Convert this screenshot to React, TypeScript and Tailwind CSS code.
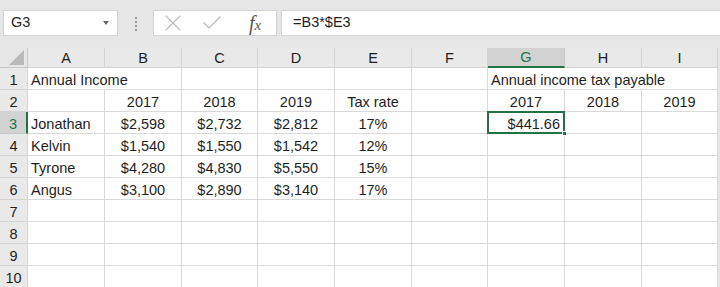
import { X, Check } from "lucide-react";

type Align = "left" | "center" | "right";

interface Cell {
  text: string;
  align?: Align;
}

const cols = ["A", "B", "C", "D", "E", "F", "G", "H", "I"];

const rows: Record<number, Record<string, Cell>> = {
  1: {
    A: { text: "Annual Income", align: "left" },
    G: { text: "Annual income tax payable", align: "left" },
  },
  2: {
    B: { text: "2017" },
    C: { text: "2018" },
    D: { text: "2019" },
    E: { text: "Tax rate" },
    G: { text: "2017" },
    H: { text: "2018" },
    I: { text: "2019" },
  },
  3: {
    A: { text: "Jonathan", align: "left" },
    B: { text: "$2,598" },
    C: { text: "$2,732" },
    D: { text: "$2,812" },
    E: { text: "17%" },
    G: { text: "$441.66", align: "right" },
  },
  4: {
    A: { text: "Kelvin", align: "left" },
    B: { text: "$1,540" },
    C: { text: "$1,550" },
    D: { text: "$1,542" },
    E: { text: "12%" },
  },
  5: {
    A: { text: "Tyrone", align: "left" },
    B: { text: "$4,280" },
    C: { text: "$4,830" },
    D: { text: "$5,550" },
    E: { text: "15%" },
  },
  6: {
    A: { text: "Angus", align: "left" },
    B: { text: "$3,100" },
    C: { text: "$2,890" },
    D: { text: "$3,140" },
    E: { text: "17%" },
  },
};

// text spilling over the right border hides that gridline
const spill: Record<number, string[]> = { 1: ["A", "G", "H"] };

const gridCols = "grid grid-cols-[28px_77px_77px_76px_77px_77px_76px_77px_77px_76px]";

function DataCell({ cell, selected, open }: { cell?: Cell; selected?: boolean; open?: boolean }) {
  const align = cell?.align ?? "center";
  return (
    <div
      className={
        open
          ? "relative h-[22px] border-r border-b border-r-white border-b-[#d9d9d9] bg-white"
          : "relative h-[22px] border-r border-b border-[#d9d9d9] bg-white"
      }
    >
      {cell && (
        <span
          className={
            align === "left"
              ? "absolute left-[3px] top-[1px] z-10 whitespace-nowrap leading-[22px]"
              : align === "right"
              ? "absolute right-[4px] top-[1px] z-10 whitespace-nowrap leading-[22px]"
              : "absolute inset-x-0 top-[1px] text-center whitespace-nowrap leading-[22px]"
          }
        >
          {cell.text}
        </span>
      )}
      {selected && (
        <>
          <div className="pointer-events-none absolute -left-px -top-px right-[-1px] bottom-[-1px] z-20 border-2 border-[#217346]" />
          <div className="absolute -right-[3px] -bottom-[3px] z-20 h-[5px] w-[5px] border border-white bg-[#217346]" />
        </>
      )}
    </div>
  );
}

function RowView({ r }: { r: number }) {
  const data = rows[r] ?? {};
  const open = spill[r] ?? [];
  return (
    <>
      {r === 3 ? (
        <div className="h-[22px] border-r-2 border-b border-r-[#217346] border-b-[#c8c8c8] bg-[#d2d2d2] pt-px text-center leading-[22px] text-[#217346]">
          {r}
        </div>
      ) : (
        <div className="h-[22px] border-r border-b border-[#d4d4d4] bg-[#e9e9e9] pt-px text-center leading-[22px]">
          {r}
        </div>
      )}
      {cols.map((c) => (
        <DataCell key={c} cell={data[c]} selected={r === 3 && c === "G"} open={open.includes(c)} />
      ))}
    </>
  );
}

export default function App() {
  return (
    <div className="h-[287px] w-[720px] overflow-hidden bg-[#e6e6e6] font-['Liberation_Sans',Arial,sans-serif] text-[14.5px] text-[#1e1e1e]">
      {/* formula bar */}
      <div className="flex h-[48px] items-start pt-[10px]">
        <div className="ml-[3px] flex h-[26px] w-[115px] items-center justify-between border border-[#d4d4d4] bg-white pl-[7px] pr-[8px]">
          <span>G3</span>
          <span className="h-0 w-0 border-x-[3.5px] border-t-[4px] border-x-transparent border-t-[#666]" />
        </div>
        <div className="flex w-[35px] flex-col items-center gap-[2px] pt-[7px]">
          <span className="h-[2px] w-[2px] bg-[#9a9a9a]" />
          <span className="h-[2px] w-[2px] bg-[#9a9a9a]" />
          <span className="h-[2px] w-[2px] bg-[#9a9a9a]" />
          <span className="h-[2px] w-[2px] bg-[#9a9a9a]" />
        </div>
        <div className="flex h-[26px] w-[124px] items-center border border-[#d4d4d4] bg-white">
          <X className="ml-[5px] h-[28px] w-[28px] shrink-0 text-[#bdbdbd]" strokeWidth={1} />
          <Check className="ml-[13px] h-[24px] w-[24px] shrink-0 text-[#bdbdbd]" strokeWidth={1.4} />
          <span className="ml-[25px] font-['Liberation_Serif',serif] text-[20px] italic leading-none text-[#555]">
            f<span className="text-[15px]">x</span>
          </span>
        </div>
        <div className="ml-[4px] flex h-[26px] flex-1 items-center border border-r-0 border-[#d4d4d4] bg-white pl-[11px]">
          =B3*$E3
        </div>
      </div>

      {/* sheet */}
      <div className={gridCols}>
        <div className="relative h-[20px] border-r border-b border-[#c8c8c8] bg-[#e6e6e6]">
          <div className="absolute bottom-[2px] right-[3px] h-0 w-0 border-b-[15px] border-l-[15px] border-l-transparent border-b-[#b9b9b9]" />
        </div>
        {cols.map((c) =>
          c === "G" ? (
            <div
              key={c}
              className="h-[20px] border-r border-b-2 border-r-[#c8c8c8] border-b-[#217346] bg-[#d2d2d2] text-center leading-[19px] text-[#217346]"
            >
              {c}
            </div>
          ) : (
            <div
              key={c}
              className="h-[20px] border-r border-b border-[#d4d4d4] bg-[#e9e9e9] text-center leading-[20px]"
            >
              {c}
            </div>
          )
        )}
        {[1, 2, 3, 4, 5, 6, 7, 8, 9, 10].map((r) => (
          <RowView key={r} r={r} />
        ))}
      </div>
    </div>
  );
}
